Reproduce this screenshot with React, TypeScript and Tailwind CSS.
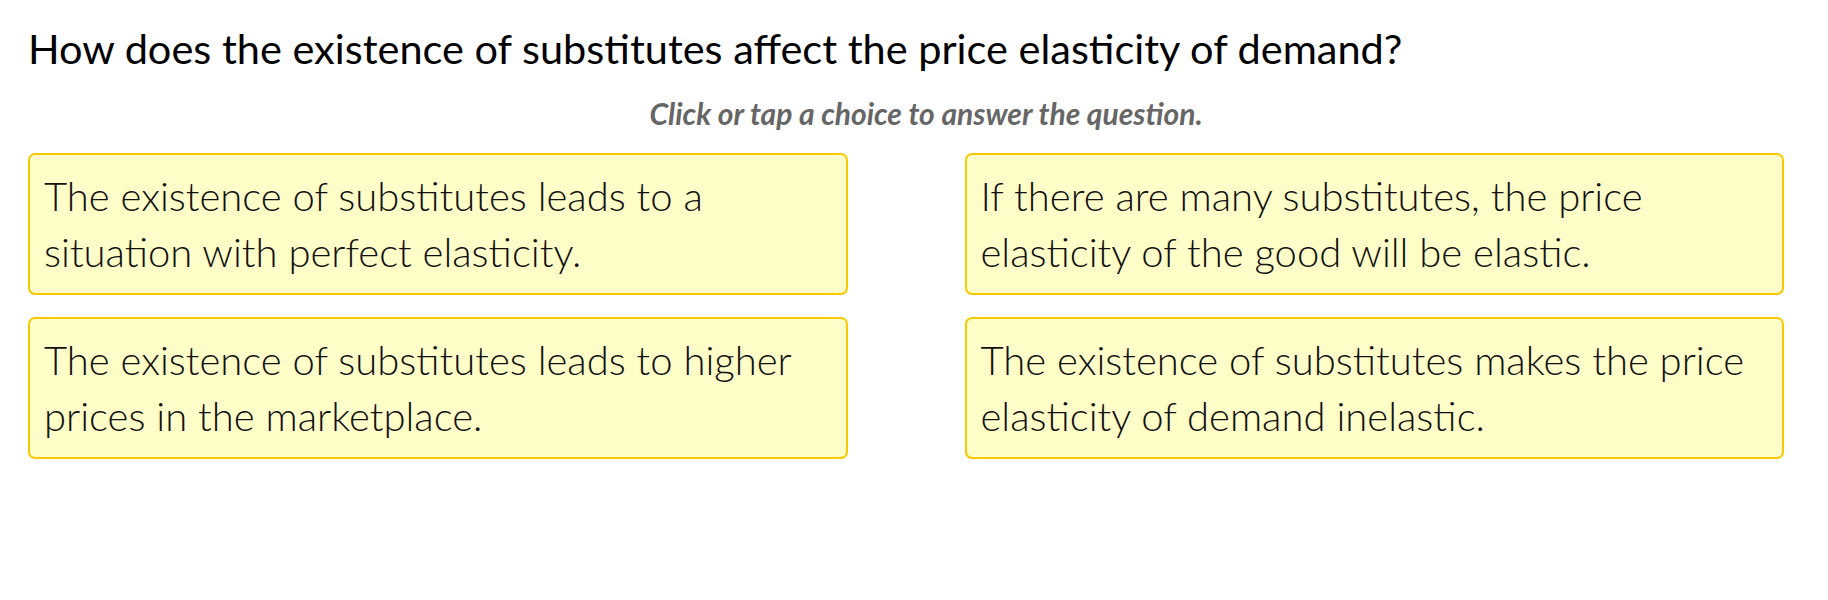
const choices = [
  "The existence of substitutes leads to a situation with perfect elasticity.",
  "If there are many substitutes, the price elasticity of the good will be elastic.",
  "The existence of substitutes leads to higher prices in the marketplace.",
  "The existence of substitutes makes the price elasticity of demand inelastic.",
];

export default function App() {
  return (
    <div className="min-h-[600px] bg-white px-[28px] pt-[22px] font-['Lato',sans-serif]">
      <h1 className="text-[41.5px] leading-[52px] text-black">
        How does the existence of substitutes affect the price elasticity of demand?
      </h1>
      <p className="ml-[24px] mt-[21px] text-center text-[30px] font-bold italic leading-[36px] text-[#666666]">
        Click or tap a choice to answer the question.
      </p>
      <div className="mt-[22px] grid w-[1756px] grid-cols-2 gap-x-[117px] gap-y-[22px]">
        {choices.map((c) => (
          <button
            key={c}
            type="button"
            className="rounded-[7px] border-2 border-[#f9c800] bg-[#fffdc8] px-[14px] py-[13px] text-left text-[40px] font-light leading-[56px] text-[#111111]"
          >
            {c}
          </button>
        ))}
      </div>
    </div>
  );
}
